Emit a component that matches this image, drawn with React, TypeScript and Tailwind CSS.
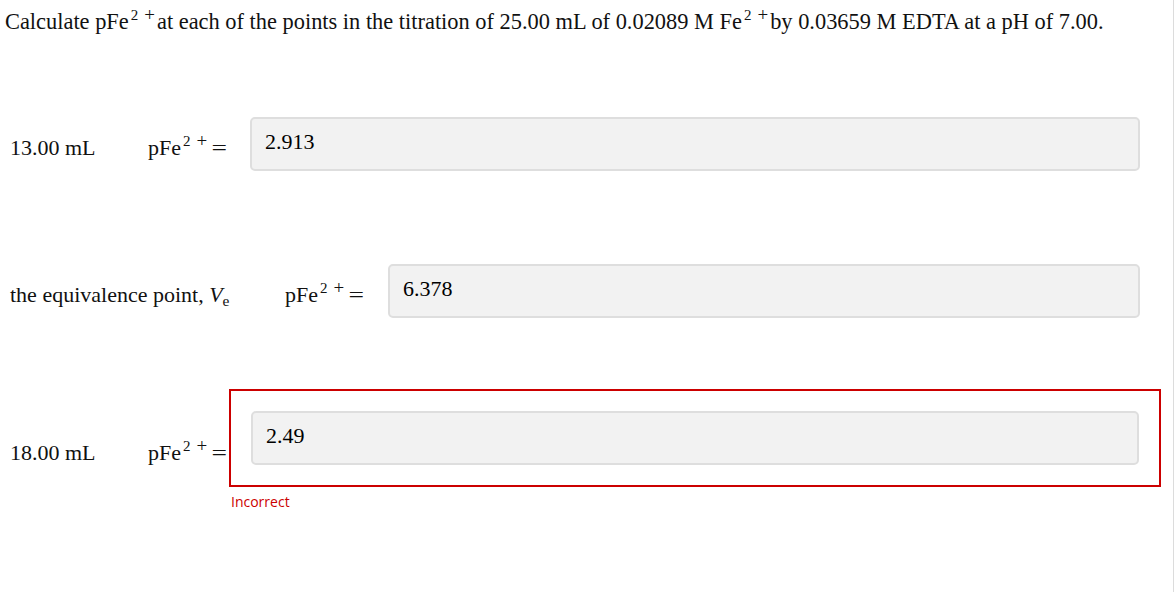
import React from 'react'

function Ion({ sym, after = 'mr-[6px]' }: { sym: string; after?: string }) {
  return (
    <span>
      {sym}
      <span className={`relative top-[-9px] text-[15px] leading-none ml-[2px] ${after}`}>
        2<span className="relative top-[1px] ml-[6px] text-[19px]">+</span>
      </span>
    </span>
  )
}

function Field({ value }: { value: string }) {
  return (
    <div className="flex-1 h-[54px] rounded-[5px] border-2 border-[#dedede] bg-[#f2f2f2] pl-[13px] pt-[10px] text-[22px] leading-[26px] text-black">
      {value}
    </div>
  )
}

export default function App() {
  return (
    <div className="relative min-h-[592px] w-[1175px] bg-white font-['Liberation_Serif',serif] text-[#111]">
      {/* right edge rule */}
      <div className="absolute top-0 bottom-0 right-[1px] w-px bg-[#dcdcdc]" />

      <p className="pl-[5px] pt-[8px] text-[22.4px] leading-[28px]">
        Calculate p<Ion sym="Fe" after="mr-[2px]" />at each of the points in the titration of 25.00 mL of
        0.02089 M <Ion sym="Fe" after="mr-[2px]" />by 0.03659 M EDTA at a pH of 7.00.
      </p>

      {/* 13.00 mL */}
      <div className="mt-[81px] flex items-start pl-[10px] pr-[35px] text-[22px] leading-[26px]">
        <span className="pt-[18px] w-[138px]">13.00 mL</span>
        <span className="pt-[18px] w-[102px]">
          p<Ion sym="Fe" /><span className="inline-block scale-x-125">=</span>
        </span>
        <Field value="2.913" />
      </div>

      {/* equivalence point */}
      <div className="mt-[93px] flex items-start pl-[10px] pr-[35px] text-[22px] leading-[26px]">
        <span className="pt-[18px] w-[275px]">
          the equivalence point, <i>V</i>
          <sub className="text-[0.7em]">e</sub>
        </span>
        <span className="pt-[18px] w-[103px]">
          p<Ion sym="Fe" /><span className="inline-block scale-x-125">=</span>
        </span>
        <Field value="6.378" />
      </div>

      {/* 18.00 mL - incorrect */}
      <div className="mt-[71px] flex items-start pl-[10px] pr-[14px] text-[22px] leading-[26px]">
        <span className="pt-[51px] w-[138px]">18.00 mL</span>
        <span className="pt-[51px] w-[81px]">
          p<Ion sym="Fe" /><span className="inline-block scale-x-125">=</span>
        </span>
        <div className="flex-1">
          <div className="border-2 border-[#cc0000] p-[20px] flex">
            <Field value="2.49" />
          </div>
          <p className="mt-[5px] pl-[2px] font-['Open_Sans',sans-serif] text-[14px] leading-[19px] text-[#cc0000]">
            Incorrect
          </p>
        </div>
      </div>
    </div>
  )
}
